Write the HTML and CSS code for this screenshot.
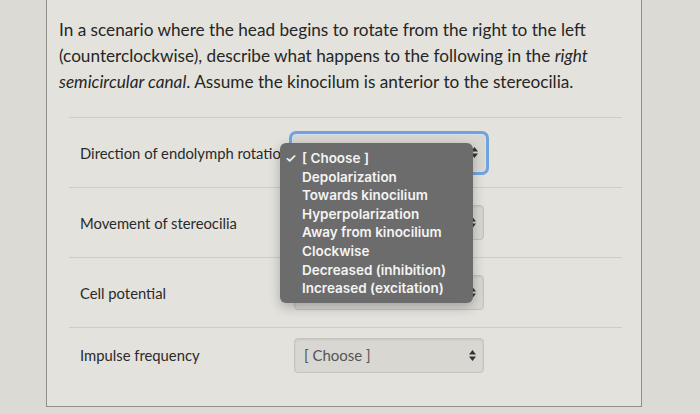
FILE: index.html
```html
<!DOCTYPE html>
<html lang="en">
<head>
<meta charset="utf-8"/>
<meta content="width=device-width, initial-scale=1.0" name="viewport"/>
<title>Semicircular canal question</title>
<link rel="stylesheet" href="styles.css">
</head>
<body>
<div class="card">
  <p class="question">In a scenario where the head begins to rotate from the right to the left<br>(counterclockwise), describe what happens to the following in the <em>right</em><br><em>semicircular canal</em>. Assume the kinocilum is anterior to the stereocilia.</p>

  <div class="answers">
    <div class="row">
      <label>Direction of endolymph rotation</label>
      <div class="select is-focused">
        <span>[ Choose ]</span>
        <svg class="arrows" width="7" height="11" viewBox="0 0 7 11"><path d="M0 4.5 L3.5 0 L7 4.5Z M0 6.5 L3.5 11 L7 6.5Z"/></svg>
      </div>
    </div>
    <div class="row">
      <label>Movement of stereocilia</label>
      <div class="select">
        <span>[ Choose ]</span>
        <svg class="arrows" width="7" height="11" viewBox="0 0 7 11"><path d="M0 4.5 L3.5 0 L7 4.5Z M0 6.5 L3.5 11 L7 6.5Z"/></svg>
      </div>
    </div>
    <div class="row">
      <label>Cell potential</label>
      <div class="select">
        <span>[ Choose ]</span>
        <svg class="arrows" width="7" height="11" viewBox="0 0 7 11"><path d="M0 4.5 L3.5 0 L7 4.5Z M0 6.5 L3.5 11 L7 6.5Z"/></svg>
      </div>
    </div>
    <div class="row">
      <label>Impulse frequency</label>
      <div class="select">
        <span>[ Choose ]</span>
        <svg class="arrows" width="7" height="11" viewBox="0 0 7 11"><path d="M0 4.5 L3.5 0 L7 4.5Z M0 6.5 L3.5 11 L7 6.5Z"/></svg>
      </div>
    </div>
  </div>

  <!-- open dropdown of the first select -->
  <ul class="menu">
    <li class="selected"><span class="check">✓</span>[ Choose ]</li>
    <li><span class="check"></span>Depolarization</li>
    <li><span class="check"></span>Towards kinocilium</li>
    <li><span class="check"></span>Hyperpolarization</li>
    <li><span class="check"></span>Away from kinocilium</li>
    <li><span class="check"></span>Clockwise</li>
    <li><span class="check"></span>Decreased (inhibition)</li>
    <li><span class="check"></span>Increased (excitation)</li>
  </ul>
</div>
</body>
</html>
```

FILE: styles.css
```css
body {
  margin: 0;
  height: 414px;
  overflow: hidden;
  background-color: #dbdad5;
  font-family: Lato, 'Liberation Sans', sans-serif;
  color: #2a2a2a;
}

.card {
  position: relative;
  box-sizing: border-box;
  width: 596px;
  height: 408px;
  margin: -1px 0 0 46px;
  padding: 17px 0 0 12px;
  background-color: #e3e2dd;
  border: 1px solid #8f8e8a;
}

.question {
  margin: 0;
  font-size: 17.2px;
  line-height: 26px;
  color: #262626;
}

.answers {
  margin: 22px 19px 0 10px;
}

.row {
  display: flex;
  align-items: center;
  height: 69px;
  padding-left: 11px;
  border-top: 1px solid #cdccc7;
}

.row:last-child {
  height: 54px;
}

.row label {
  width: 214px;
  font-size: 14.8px;
}

.select {
  display: flex;
  align-items: center;
  justify-content: space-between;
  box-sizing: border-box;
  width: 190px;
  height: 35px;
  padding: 0 7px 0 9px;
  font-size: 15px;
  color: #555;
  background-color: #d8d7d2;
  border: 1px solid #c4c3be;
  border-radius: 4px;
  box-shadow: inset 0 1px 2px rgba(0,0,0,0.08);
}

.select.is-focused {
  width: 194px;
  height: 38px;
  margin-left: -2px;
  border-color: #d4e1f2;
  box-shadow: 0 0 0 3px #72a2de;
}

.arrows {
  fill: #333;
}

/* native-looking popup list */
.menu {
  position: absolute;
  left: 233px;
  top: 143px;
  width: 193px;
  margin: 0;
  padding: 6px 0 5px;
  list-style: none;
  background-color: #6c6c6c;
  border-radius: 6px;
  box-shadow: 0 4px 12px rgba(0,0,0,0.25);
  font-family: Inter, Roboto, sans-serif;
  font-size: 13.5px;
  font-weight: 600;
  line-height: 18.6px;
  color: #f4f4f4;
}

.menu li {
  display: flex;
  padding-left: 5px;
}

.check {
  width: 17px;
  font-size: 13px;
}
```
